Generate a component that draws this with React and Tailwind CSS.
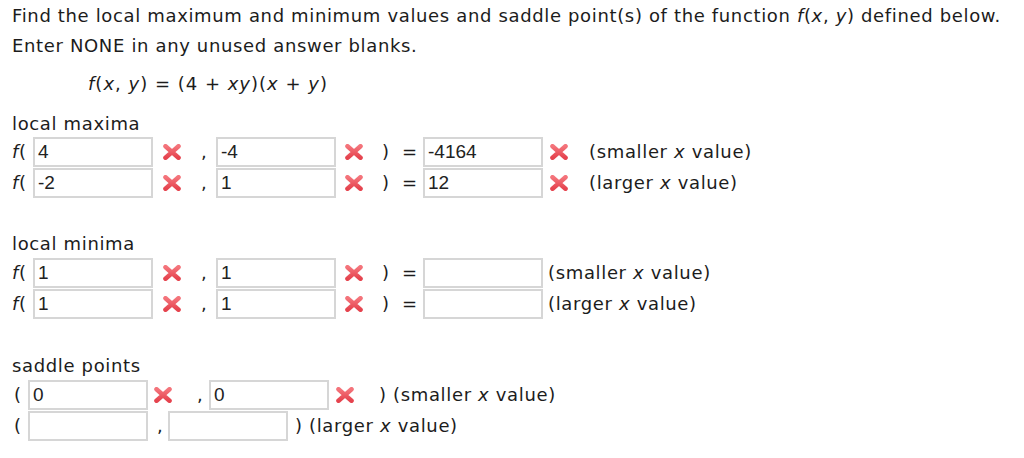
const XMark = () => (
  <svg width="20" height="16" viewBox="0 0 20 16" className="block">
    <defs>
      <linearGradient id="xg" x1="0" y1="0" x2="0" y2="1">
        <stop offset="0" stopColor="#f4747b" />
        <stop offset="1" stopColor="#e5434e" />
      </linearGradient>
    </defs>
    <path d="M3.5 2.3 L16.5 13.7 M16.5 2.3 L3.5 13.7" stroke="url(#xg)" strokeWidth="4.6" strokeLinecap="round" fill="none" />
  </svg>
);

const Box = ({ value, className = '' }) => (
  <input
    type="text"
    readOnly
    value={value}
    className={`w-[120px] h-[30px] border-2 border-[#d6d6d6] bg-white pl-[3px] text-[19px] tracking-normal text-[#222] outline-none ${className}`}
    style={{ fontFamily: '"Liberation Sans", Arial, sans-serif' }}
  />
);

const I = ({ children }) => <span className="italic">{children}</span>;

// one "f( a , b ) = c" row
const FRow = ({ x, y, z, marks, label, labelGap }) => (
  <div className="flex items-center h-[31px]">
    <span className="w-[21px] whitespace-nowrap">
      <I>f</I>(
    </span>
    <Box value={x} />
    <span className="w-[29px] pl-[9px]">{marks && <XMark />}</span>
    <span className="w-[34px] pl-[19px]">,</span>
    <Box value={y} />
    <span className="w-[28px] pl-[8px]">{marks && <XMark />}</span>
    <span className="w-[18px] pl-[18px] whitespace-nowrap">)</span>
    <span className="w-[41px] pl-[20px]">=</span>
    <Box value={z} />
    {z && (
      <span className="pl-[6px]">
        <XMark />
      </span>
    )}
    <span className="whitespace-nowrap" style={{ marginLeft: labelGap }}>
      ({label} <I>x</I> value)
    </span>
  </div>
);

export default function App() {
  return (
    <div
      className="min-h-screen bg-white text-[#1c1c1c] text-[18px] tracking-[0.65px] pl-[12px]"
      style={{ fontFamily: '"DejaVu Sans", Verdana, sans-serif' }}
    >
      <p className="leading-[30px] pt-[1px] whitespace-nowrap">
        Find the local maximum and minimum values and saddle point(s) of the function <I>f</I>(<I>x</I>, <I>y</I>) defined below.
      </p>
      <p className="leading-[30px]">Enter NONE in any unused answer blanks.</p>
      <p className="leading-[30px] mt-[8px] pl-[76px] tracking-[1px]">
        <I>f</I>(<I>x</I>, <I>y</I>) = (4 + <I>xy</I>)(<I>x</I> + <I>y</I>)
      </p>

      <div className="mt-[13px] leading-[24px]">local maxima</div>
      <div className="mt-[0px]">
        <FRow x="4" y="-4" z="-4164" marks label="smaller" labelGap="20px" />
        <FRow x="-2" y="1" z="12" marks label="larger" labelGap="20px" />
      </div>

      <div className="mt-[34px] leading-[24px]">local minima</div>
      <div className="mt-[1px]">
        <FRow x="1" y="1" z="" marks label="smaller" labelGap="5px" />
        <FRow x="1" y="1" z="" marks label="larger" labelGap="5px" />
      </div>

      <div className="mt-[35px] leading-[24px]">saddle points</div>
      <div className="mt-[1px]">
        <div className="flex items-center h-[31px]">
          <span className="w-[16px] pl-[2px]">(</span>
          <Box value="0" />
          <span className="w-[26px] pl-[5px]">
            <XMark />
          </span>
          <span className="w-[35px] pl-[23px]">,</span>
          <Box value="0" />
          <span className="w-[26px] pl-[6px]">
            <XMark />
          </span>
          <span className="pl-[24px] whitespace-nowrap">
            ) (smaller <I>x</I> value)
          </span>
        </div>
        <div className="flex items-center h-[31px]">
          <span className="w-[16px] pl-[2px]">(</span>
          <Box value="" />
          <span className="w-[20px] pl-[9px]">,</span>
          <Box value="" />
          <span className="pl-[7px] whitespace-nowrap">
            ) (larger <I>x</I> value)
          </span>
        </div>
      </div>
    </div>
  );
}
